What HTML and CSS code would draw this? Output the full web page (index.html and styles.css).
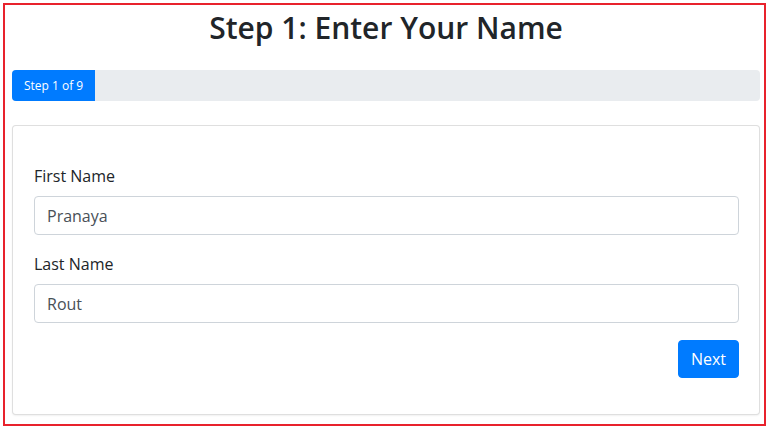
FILE: index.html
```html
<!DOCTYPE html>
<html lang="en">
<head>
<meta charset="utf-8">
<title>Step 1: Enter Your Name</title>
<link rel="stylesheet" href="styles.css">
</head>
<body>
<div class="frame">
  <div class="container">
    <h2 class="title">Step 1: Enter Your Name</h2>
    <div class="progress">
      <div class="progress-bar" style="width: 11.11%">Step 1 of 9</div>
    </div>
    <div class="card">
      <form class="card-body">
        <div class="form-group">
          <label class="form-label" for="firstName">First Name</label>
          <input class="form-control" id="firstName" type="text" value="Pranaya">
        </div>
        <div class="form-group">
          <label class="form-label" for="lastName">Last Name</label>
          <input class="form-control" id="lastName" type="text" value="Rout">
        </div>
        <div class="actions">
          <button class="btn-primary" type="button">Next</button>
        </div>
      </form>
    </div>
  </div>
</div>
</body>
</html>
```
FILE: styles.css
```css
* {
  box-sizing: border-box;
}

html, body {
  margin: 0;
  padding: 0;
  background: #ffffff;
}

body {
  padding: 3px;
  font-family: "Open Sans", "Noto Sans", "Liberation Sans", sans-serif;
  font-size: 16px;
  line-height: 1.5;
  color: #212529;
}

.frame {
  width: 763px;
  height: 423px;
  border: 2px solid #e8222c;
  padding: 0 4px 0 7px;
  overflow: hidden;
}

.container {
  display: flex;
  flex-direction: column;
}

.title {
  margin: 0 0 20px;
  font-size: 30px;
  font-weight: 600;
  line-height: 1.5;
  text-align: center;
  color: #212529;
}

.progress {
  height: 31px;
  background: #e9ecef;
  border-radius: 4px;
  overflow: hidden;
  display: flex;
  margin-bottom: 24px;
}

.progress-bar {
  background: #007bff;
  color: #ffffff;
  font-size: 12px;
  display: flex;
  align-items: center;
  justify-content: center;
  white-space: nowrap;
}

.card {
  border: 1px solid rgba(0, 0, 0, 0.125);
  border-radius: 4px;
  box-shadow: 0 1px 2px rgba(0, 0, 0, 0.06);
  background: #ffffff;
}

.card-body {
  display: flex;
  flex-direction: column;
  padding: 38px 20px 20px 21px;
  margin: 0;
}

.form-group {
  display: flex;
  flex-direction: column;
  margin-bottom: 17px;
}

.form-label {
  margin-bottom: 8px;
  line-height: 24px;
}

.form-control {
  height: 39px;
  padding: 6px 12px;
  font-family: inherit;
  font-size: 16px;
  color: #495057;
  border: 1px solid #ced4da;
  border-radius: 4px;
  background: #ffffff;
}

.actions {
  display: flex;
  justify-content: flex-end;
  margin-bottom: 16px;
}

.btn-primary {
  height: 38px;
  padding: 6px 12px;
  font-family: inherit;
  font-size: 16px;
  color: #ffffff;
  background: #007bff;
  border: 1px solid #007bff;
  border-radius: 4px;
}
```
